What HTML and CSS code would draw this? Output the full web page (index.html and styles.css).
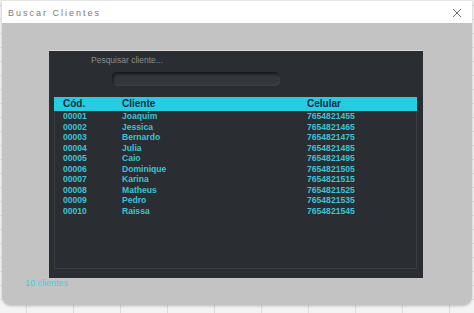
FILE: index.html
```html
<!DOCTYPE html>
<html lang="pt-BR">

<head>
  <meta charset="UTF-8" />
  <meta name="viewport" content="width=device-width, initial-scale=1.0" />
  <title>Buscar Clientes</title>
  <link rel="stylesheet" href="styles.css">
</head>

<body>
  <article class="window">
    <header class="titlebar">
      <span class="title">Buscar Clientes</span>
      <svg class="close" width="10" height="10" viewBox="0 0 10 10">
        <path d="M1 1 L9 9 M9 1 L1 9" stroke="#6b6b6b" stroke-width="1" fill="none" />
      </svg>
    </header>
    <section class="content">
      <section class="panel">
        <div class="search">
          <span class="placeholder">Pesquisar cliente...</span>
          <div class="input"></div>
        </div>
        <section class="list">
          <div class="row head">
            <div>Cód.</div>
            <div>Cliente</div>
            <div>Celular</div>
          </div>
          <div class="row"><div>00001</div><div>Joaquim</div><div>7654821455</div></div>
          <div class="row"><div>00002</div><div>Jessica</div><div>7654821465</div></div>
          <div class="row"><div>00003</div><div>Bernardo</div><div>7654821475</div></div>
          <div class="row"><div>00004</div><div>Julia</div><div>7654821485</div></div>
          <div class="row"><div>00005</div><div>Caio</div><div>7654821495</div></div>
          <div class="row"><div>00006</div><div>Dominique</div><div>7654821505</div></div>
          <div class="row"><div>00007</div><div>Karina</div><div>7654821515</div></div>
          <div class="row"><div>00008</div><div>Matheus</div><div>7654821525</div></div>
          <div class="row"><div>00009</div><div>Pedro</div><div>7654821535</div></div>
          <div class="row"><div>00010</div><div>Raissa</div><div>7654821545</div></div>
        </section>
      </section>
      <span class="count">10 clientes</span>
    </section>
  </article>
</body>

</html>
```

FILE: styles.css
```css
body {
  margin: 0;
  height: 313px;
  background-color: #f4f4f4;
  background-image: linear-gradient(90deg, #dcdcdc 1px, transparent 1px),
    linear-gradient(#e2e2e2 1px, transparent 1px);
  background-size: 47px 14px;
  background-position: 26px 0, 0 5px;
  font-family: "Liberation Sans", Arial, sans-serif;
  overflow: hidden;
}

.window {
  margin: 0 2px 0 2px;
  height: 305px;
  border-radius: 0 0 9px 9px;
  overflow: hidden;
  background-color: #c3c3c3;
  box-shadow: 0 1px 3px rgba(0, 0, 0, 0.25);
  display: flex;
  flex-direction: column;
}

.titlebar {
  height: 23px;
  flex: none;
  background-color: #ffffff;
  border-top: 1px solid #e6e6e6;
  box-sizing: border-box;
  display: flex;
  align-items: center;
  justify-content: space-between;
  padding: 1px 10px 0 6px;
}

.title {
  font-size: 9px;
  letter-spacing: 2px;
  color: #7a7a7a;
}

.content {
  flex: 1;
  display: flex;
  flex-direction: column;
  padding-top: 27px;
}

.panel {
  margin-left: 47px;
  width: 374px;
  height: 228px;
  box-sizing: border-box;
  background-color: #2a2d32;
  border-top: 1px solid #d8d8d8;
  display: flex;
  flex-direction: column;
}

.search {
  height: 46px;
  flex: none;
  display: flex;
  flex-direction: column;
  padding-left: 42px;
  box-sizing: border-box;
}

.placeholder {
  font-size: 8.5px;
  color: #8b8e93;
  line-height: 10px;
  margin-top: 4px;
}

.input {
  margin: 7px 0 0 21px;
  width: 168px;
  height: 14px;
  border-radius: 5px;
  background-color: #33363c;
  box-shadow: inset 1px 2px 3px #14161a, inset -1px -1px 2px #44474d;
}

.list {
  margin: 0 6px 0 5px;
  height: 172px;
  border: 1px solid #3b3e44;
  border-top: none;
  box-sizing: border-box;
}

.row {
  display: grid;
  grid-template-columns: 59px 185px auto;
  padding-left: 8px;
  height: 10.5px;
  line-height: 10.5px;
  font-size: 8.6px;
  font-weight: bold;
  color: #3cc3d4;
}

.row.head {
  height: 14px;
  line-height: 14px;
  font-size: 10px;
  margin: 0 -1px 0 -1px;
  padding-left: 9px;
  background-color: #24cde2;
  color: #0f2c40;
}

.count {
  margin: 0 0 0 23px;
  font-size: 9px;
  line-height: 10px;
  color: #34d4e4;
}
```
